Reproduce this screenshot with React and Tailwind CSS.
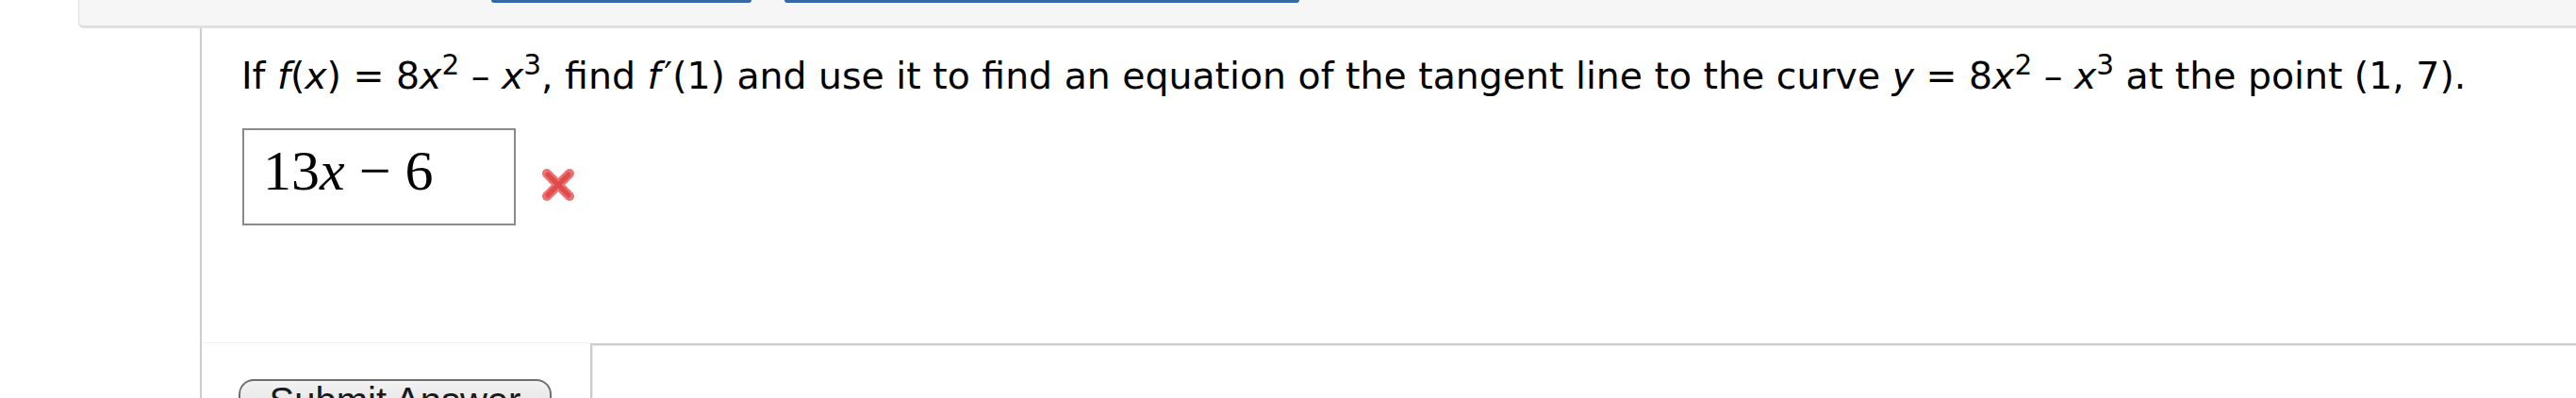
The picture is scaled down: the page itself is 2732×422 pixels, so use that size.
// App - WebAssign style question snippet (tangent line)
const RedCross = () => (
    <svg width="40" height="40" viewBox="0 0 40 40" className="block">
        <g strokeLinecap="round">
            <line x1="8" y1="8" x2="32" y2="32" stroke="#ec7070" strokeWidth="10" />
            <line x1="32" y1="8" x2="8" y2="32" stroke="#ec7070" strokeWidth="10" />
            <line x1="9" y1="9" x2="31" y2="31" stroke="#e04b4b" strokeWidth="5" />
            <line x1="31" y1="9" x2="9" y2="31" stroke="#e04b4b" strokeWidth="5" />
        </g>
    </svg>
);

const Question = () => (
    <p className="text-[39.4px] leading-[48px] text-black whitespace-nowrap">
        If <i>f</i>(<i>x</i>) = 8<i>x</i><sup>2</sup> – <i>x</i><sup>3</sup>, find <i>f</i>&#8202;′(1) and use it to find an equation of the tangent line to the curve <i>y</i> = 8<i>x</i><sup>2</sup> – <i>x</i><sup>3</sup> at the point (1, 7).
    </p>
);

export default function App() {
    return (
        <div className="w-[2732px] h-[422px] overflow-hidden bg-white flex flex-col font-['Verdana','DejaVu_Sans',sans-serif]">
            {/* top toolbar, mostly scrolled away */}
            <div className="ml-[83px] h-[30px] shrink-0 bg-[#f6f6f6] border-l border-b-[3px] border-[#e0e0e0] rounded-bl-[6px] flex items-start pl-[437px] gap-[35px]">
                <div className="w-[276px] h-[3px] bg-[#3469a3] rounded-b-[4px]"></div>
                <div className="w-[546px] h-[3px] bg-[#3469a3] rounded-b-[4px]"></div>
            </div>

            <div className="ml-[212px] flex-1 border-l-2 border-[#cdcdcd] flex flex-col">
                <div className="pl-[42px] pt-[26px]">
                    <Question />
                    {/* answer row */}
                    <div className="flex items-start mt-[32px] ml-[1px]">
                        <div className="w-[290px] h-[103px] border-2 border-[#8a8a8a] pl-[20px] pt-[13px] text-[60px] leading-none text-black font-['Liberation_Serif','Times_New_Roman',serif] whitespace-nowrap flex items-start">
                            <span>13<i>x</i></span>
                            <span className="mx-[15px]">−</span>
                            <span>6</span>
                        </div>
                        <div className="ml-[25px] mt-[40px]">
                            <RedCross />
                        </div>
                    </div>
                </div>

                {/* bottom section */}
                <div className="mt-auto h-[59px] flex">
                    <div className="w-[412px] border-t border-[#f2f2f2] pl-[39px] pt-[38px]">
                        <button type="button" className="w-[332px] h-[60px] rounded-[16px] border-2 border-[#6e6e6e] bg-gradient-to-b from-[#f2f2f2] to-[#d9d9d9] text-[40px] leading-none pt-[1px] text-[#1a1a1a] font-['Liberation_Sans','Arial',sans-serif] flex justify-center items-start whitespace-nowrap">
                            Submit Answer
                        </button>
                    </div>
                    <div className="flex-1 mt-px border-t-2 border-l-2 border-[#cccccc]">
                        <div className="h-full border-t border-l border-[#ececec]"></div>
                    </div>
                </div>
            </div>
        </div>
    );
}
